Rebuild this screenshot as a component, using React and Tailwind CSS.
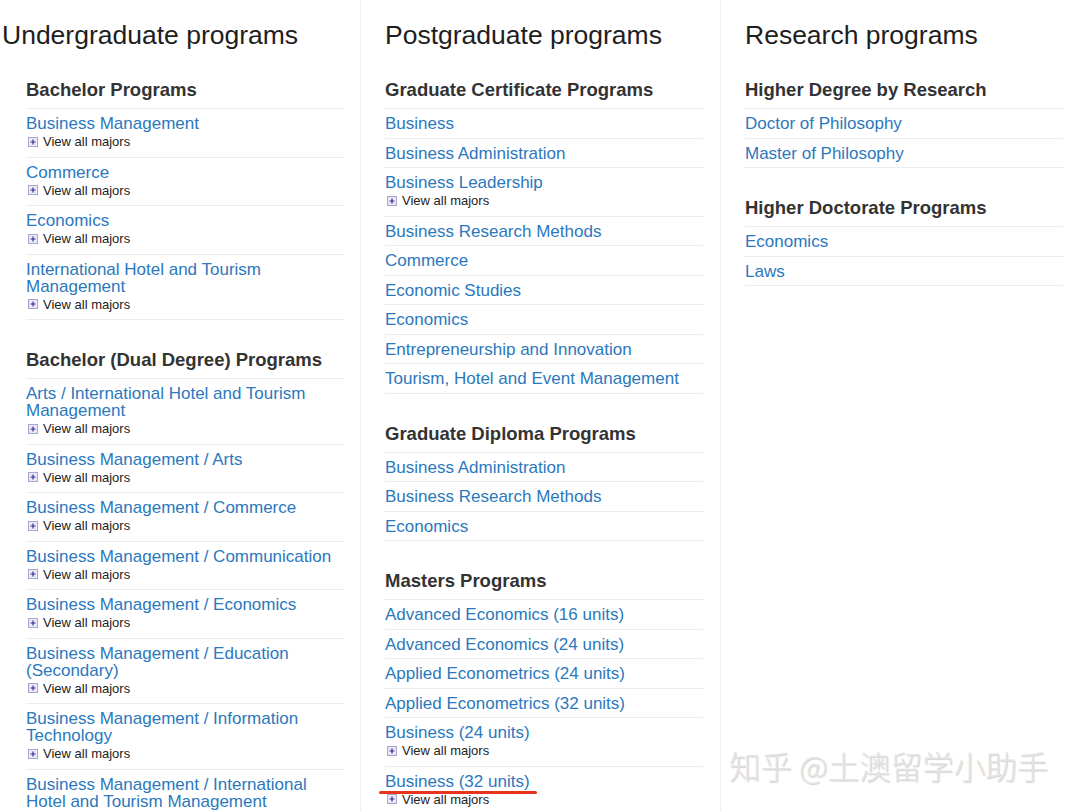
import React from "react";

const FONT = { fontFamily: '"Liberation Sans", Arial, Helvetica, sans-serif' };

const undergrad = [
  {
    title: "Bachelor Programs",
    items: [
      { name: "Business Management", majors: true },
      { name: "Commerce", majors: true },
      { name: "Economics", majors: true },
      { name: "International Hotel and Tourism Management", majors: true },
    ],
  },
  {
    title: "Bachelor (Dual Degree) Programs",
    items: [
      { name: "Arts / International Hotel and Tourism Management", majors: true },
      { name: "Business Management / Arts", majors: true },
      { name: "Business Management / Commerce", majors: true },
      { name: "Business Management / Communication", majors: true },
      { name: "Business Management / Economics", majors: true },
      { name: "Business Management / Education (Secondary)", majors: true },
      { name: "Business Management / Information Technology", majors: true },
      { name: "Business Management / International Hotel and Tourism Management", majors: true },
    ],
  },
];

const postgrad = [
  {
    title: "Graduate Certificate Programs",
    items: [
      { name: "Business" },
      { name: "Business Administration" },
      { name: "Business Leadership", majors: true },
      { name: "Business Research Methods" },
      { name: "Commerce" },
      { name: "Economic Studies" },
      { name: "Economics" },
      { name: "Entrepreneurship and Innovation" },
      { name: "Tourism, Hotel and Event Management" },
    ],
  },
  {
    title: "Graduate Diploma Programs",
    items: [
      { name: "Business Administration" },
      { name: "Business Research Methods" },
      { name: "Economics" },
    ],
  },
  {
    title: "Masters Programs",
    items: [
      { name: "Advanced Economics (16 units)" },
      { name: "Advanced Economics (24 units)" },
      { name: "Applied Econometrics (24 units)" },
      { name: "Applied Econometrics (32 units)" },
      { name: "Business (24 units)", majors: true },
      { name: "Business (32 units)", majors: true, marked: true },
    ],
  },
];

const research = [
  {
    title: "Higher Degree by Research",
    items: [{ name: "Doctor of Philosophy" }, { name: "Master of Philosophy" }],
  },
  {
    title: "Higher Doctorate Programs",
    items: [{ name: "Economics" }, { name: "Laws" }],
  },
];

function PlusBox() {
  return (
    <span className="flex items-center justify-center w-[10px] h-[10px] ml-[2px] border border-[#a9a6cf] bg-[#ebe8f7]">
      <svg width="6" height="6" viewBox="0 0 6 6">
        <path d="M3 0.5v5M0.5 3h5" stroke="#3b2f8f" strokeWidth="1.2" />
      </svg>
    </span>
  );
}

function Row({ item }) {
  return (
    <li className="pt-[6px] pb-[5.5px] border-b border-[#ececec]">
      <div className="text-[17px] leading-[17px] text-[#2b78bd]">
        <a className="relative">
          {item.name}
          {item.marked && (
            <span className="absolute left-[-6px] right-[-7px] bottom-[-3px] h-[3px] bg-[#e8341c] rounded-sm" />
          )}
        </a>
      </div>
      {item.majors && (
        <div className="flex items-center gap-[5px] text-[13px] leading-[19px] text-[#222]">
          <PlusBox />
          <span>View all majors</span>
        </div>
      )}
    </li>
  );
}

function Section({ section }) {
  return (
    <div className="mt-[29px] w-[318px]">
      <h3 className="text-[18.5px] leading-[22px] font-bold text-[#333] pb-[7px] border-b border-[#ececec]">
        {section.title}
      </h3>
      <ul className="block">
        {section.items.map((item, i) => (
          <Row key={i} item={item} />
        ))}
      </ul>
    </div>
  );
}

function Column({ title, sections, titleClass, bodyClass, className }) {
  return (
    <div className={className}>
      <h2 className={`text-[26.5px] leading-[30px] text-[#1e1e1e] pt-[20px] ${titleClass}`}>{title}</h2>
      <div className={bodyClass}>
        {sections.map((s, i) => (
          <Section key={i} section={s} />
        ))}
      </div>
    </div>
  );
}

export default function App() {
  return (
    <div className="relative w-[1080px] h-[811px] overflow-hidden bg-white flex" style={FONT}>
      <Column
        title="Undergraduate programs"
        sections={undergrad}
        className="w-[361px] shrink-0 border-r border-[#efefef]"
        titleClass="pl-[2px]"
        bodyClass="pl-[26px]"
      />
      <Column
        title="Postgraduate programs"
        sections={postgrad}
        className="w-[360px] shrink-0 border-r border-[#efefef] pl-[24px]"
        titleClass=""
        bodyClass=""
      />
      <Column
        title="Research programs"
        sections={research}
        className="flex-1 pl-[24px]"
        titleClass=""
        bodyClass=""
      />

      {/* watermark */}
      <div
        className="absolute left-[729px] top-[746px] text-[31.5px] leading-[38px] text-[#e4e4e4] whitespace-nowrap"
        style={{
          fontFamily: '"Noto Sans CJK SC", sans-serif',
          fontWeight: 300,
          textShadow: "1px 1px 1px rgba(0,0,0,0.18)",
        }}
      >
        知乎 @土澳留学小助手
      </div>
    </div>
  );
}
